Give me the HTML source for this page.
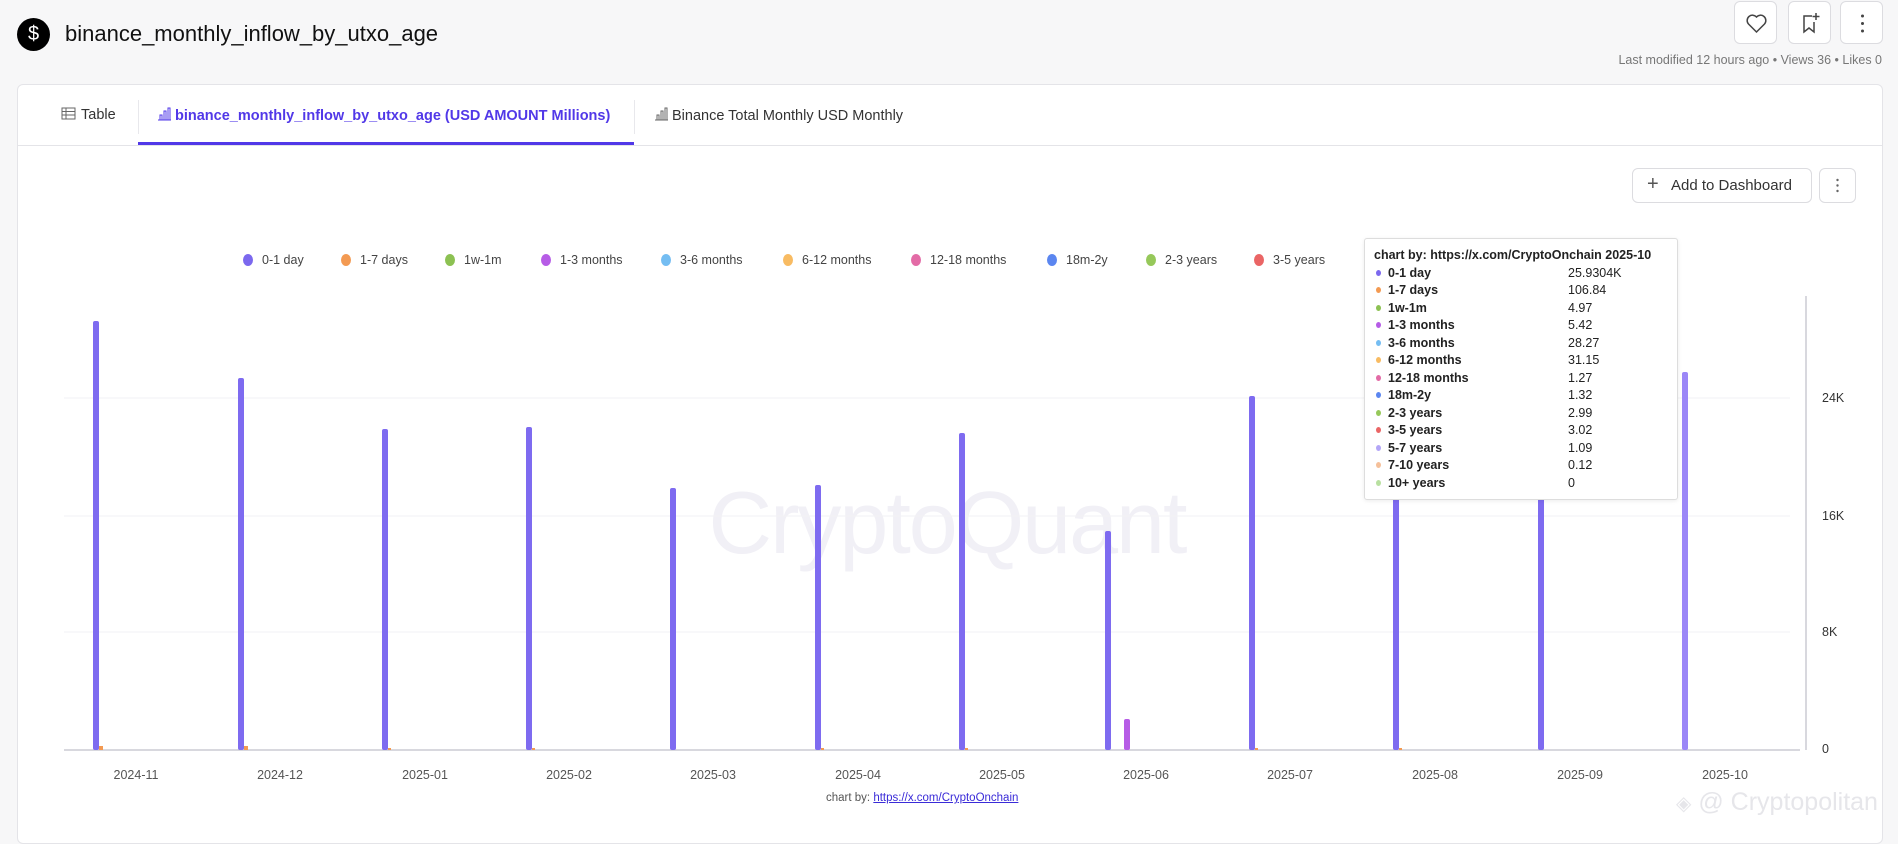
<!DOCTYPE html>
<html><head><meta charset="utf-8"><style>
*{margin:0;padding:0;box-sizing:border-box}
body{width:1898px;height:827px;overflow:hidden;background:#f7f7f8;font-family:"Liberation Sans",sans-serif;position:relative;color:#222}
.a{position:absolute}
.btn{position:absolute;border:1px solid #dcdce0;border-radius:6px;background:#fff}
.tab{position:absolute;top:107px;font-size:14.5px;color:#333;white-space:nowrap}
.lg{position:absolute;top:253px;font-size:12.5px;color:#444;white-space:nowrap}
.lg i{display:inline-block;width:10px;height:12px;border-radius:50%;margin-right:9px;vertical-align:-2px}
.xl{position:absolute;top:768px;font-size:12.5px;color:#555;transform:translateX(-50%)}
.yl{position:absolute;left:1822px;font-size:12.5px;color:#333}
.tt{position:absolute;left:1364px;top:238px;width:314px;height:262px;background:#fff;border:1px solid #ddd;border-radius:3px;font-size:12.5px;padding:8px 0 0 9px;box-shadow:0 1px 4px rgba(0,0,0,.08)}
.tt div{height:17.5px;line-height:17.5px;position:relative;white-space:nowrap}
.tt b{font-weight:bold}
.tt i{display:inline-block;width:5px;height:6px;border-radius:50%;margin:0 7px 1px 2px;vertical-align:middle}
.tt span{position:absolute;left:194px;color:#222}
</style></head><body>
<div class="a" style="left:17px;top:18px;width:33px;height:33px;border-radius:50%;background:#000;color:#fff;font-size:20px;text-align:center;line-height:33px">$</div>
<div class="a" style="left:65px;top:21px;font-size:22px;color:#111">binance_monthly_inflow_by_utxo_age</div>
<div class="btn" style="left:1734px;top:1px;width:43px;height:43px"><svg width="43" height="43"><path d="M21.5 30 L13.5 22 A4.6 4.6 0 0 1 21.5 15 A4.6 4.6 0 0 1 29.5 22 Z" fill="none" stroke="#444" stroke-width="1.5"/></svg></div>
<div class="btn" style="left:1788px;top:1px;width:43px;height:43px"><svg width="43" height="43"><path d="M23 14 H15 V30 L20 26 L25 30 V20 M27 11 V18 M23.5 14.5 H30.5" fill="none" stroke="#444" stroke-width="1.5"/></svg></div>
<div class="btn" style="left:1840px;top:1px;width:43px;height:43px"><svg width="43" height="43"><circle cx="21.5" cy="14" r="1.5" fill="#444"/><circle cx="21.5" cy="21.5" r="1.5" fill="#444"/><circle cx="21.5" cy="29" r="1.5" fill="#444"/></svg></div>
<div class="a" style="right:16px;top:53px;font-size:12.5px;color:#777">Last modified 12 hours ago • Views 36 • Likes 0</div>

<div class="a" style="left:17px;top:84px;width:1866px;height:760px;background:#fff;border:1px solid #e4e4e8;border-radius:6px"></div>
<div class="a" style="left:18px;top:145px;width:1864px;height:1px;background:#e4e4e8"></div>
<div class="a" style="left:138px;top:142px;width:496px;height:3px;background:#5138e8"></div>
<div class="a" style="left:138px;top:100px;width:1px;height:34px;background:#e8e8ec"></div>
<div class="a" style="left:634px;top:100px;width:1px;height:34px;background:#e8e8ec"></div>
<div class="tab" style="left:61px"><svg width="15" height="13" style="vertical-align:-1px;margin-right:5px"><rect x="1" y="1" width="13" height="11" fill="none" stroke="#666"/><path d="M1 4.5H14M1 8H14M5 1V12" stroke="#666"/></svg>Table</div>
<div class="tab" style="left:157px;color:#5138e8;font-weight:bold"><svg width="15" height="14" style="vertical-align:-1px;margin-right:3px"><path d="M1 13H14M3 13V8H5V13M7 13V4H9V13M11 13V1H13V13" fill="none" stroke="#5138e8"/></svg>binance_monthly_inflow_by_utxo_age (USD AMOUNT Millions)</div>
<div class="tab" style="left:654px"><svg width="15" height="14" style="vertical-align:-1px;margin-right:3px"><path d="M1 13H14M3 13V8H5V13M7 13V4H9V13M11 13V1H13V13" fill="none" stroke="#666"/></svg>Binance Total Monthly USD Monthly</div>

<div class="btn" style="left:1632px;top:168px;width:180px;height:35px;font-size:15px;color:#333;line-height:33px;padding-left:38px">Add to Dashboard<span style="position:absolute;left:14px;top:-1px;font-size:20px;color:#555">+</span></div>
<div class="btn" style="left:1819px;top:168px;width:37px;height:35px"><svg width="35" height="33"><circle cx="17.5" cy="11" r="1.2" fill="#666"/><circle cx="17.5" cy="16.5" r="1.2" fill="#666"/><circle cx="17.5" cy="22" r="1.2" fill="#666"/></svg></div>

<div class="lg" style="left:243px"><i style="background:#7b68ee"></i>0-1 day</div>
<div class="lg" style="left:341px"><i style="background:#f39a52"></i>1-7 days</div>
<div class="lg" style="left:445px"><i style="background:#8cc152"></i>1w-1m</div>
<div class="lg" style="left:541px"><i style="background:#b65ce6"></i>1-3 months</div>
<div class="lg" style="left:661px"><i style="background:#74bdf2"></i>3-6 months</div>
<div class="lg" style="left:783px"><i style="background:#f8bb62"></i>6-12 months</div>
<div class="lg" style="left:911px"><i style="background:#e36ba6"></i>12-18 months</div>
<div class="lg" style="left:1047px"><i style="background:#5b86f0"></i>18m-2y</div>
<div class="lg" style="left:1146px"><i style="background:#96c85a"></i>2-3 years</div>
<div class="lg" style="left:1254px"><i style="background:#ea6565"></i>3-5 years</div>

<svg class="a" style="left:0;top:0" width="1898" height="827">
<text x="947" y="553" font-family="Liberation Sans" font-size="88" fill="#f1f0f6" text-anchor="middle" letter-spacing="-2">CryptoQuant</text>
<g stroke="#f2f2f4"><line x1="64" y1="398" x2="1790" y2="398"/><line x1="64" y1="516" x2="1790" y2="516"/><line x1="64" y1="632" x2="1790" y2="632"/></g>
<line x1="1806" y1="296" x2="1806" y2="750" stroke="#d8d8de" stroke-width="2"/>
<line x1="64" y1="750" x2="1800" y2="750" stroke="#d8d8de" stroke-width="2"/>
<g fill="#7e6bf0">
<rect x="93" y="321" width="6" height="429" rx="2"/>
<rect x="238" y="378" width="6" height="372" rx="2"/>
<rect x="382" y="429" width="6" height="321" rx="2"/>
<rect x="526" y="427" width="6" height="323" rx="2"/>
<rect x="670" y="488" width="6" height="262" rx="2"/>
<rect x="815" y="485" width="6" height="265" rx="2"/>
<rect x="959" y="433" width="6" height="317" rx="2"/>
<rect x="1105" y="531" width="6" height="219" rx="2"/>
<rect x="1249" y="396" width="6" height="354" rx="2"/>
<rect x="1393" y="470" width="6" height="280" rx="2"/>
<rect x="1538" y="470" width="6" height="280" rx="2"/>
</g>
<rect x="1682" y="372" width="6" height="378" rx="2" fill="#9b87f7"/>
<rect x="1124" y="719" width="6" height="31" rx="2" fill="#b65ce6"/>
<g fill="#f39a52"><rect x="99" y="746" width="4" height="4"/><rect x="244" y="746" width="4" height="4"/><rect x="388" y="748" width="3" height="2"/><rect x="532" y="748" width="3" height="2"/><rect x="821" y="748" width="3" height="2"/><rect x="965" y="748" width="3" height="2"/><rect x="1255" y="748" width="3" height="2"/><rect x="1399" y="748" width="3" height="2"/></g>
</svg>
<div class="yl" style="top:391px">24K</div>
<div class="yl" style="top:509px">16K</div>
<div class="yl" style="top:625px">8K</div>
<div class="yl" style="top:742px">0</div>
<div class="xl" style="left:136px">2024-11</div><div class="xl" style="left:280px">2024-12</div><div class="xl" style="left:425px">2025-01</div><div class="xl" style="left:569px">2025-02</div><div class="xl" style="left:713px">2025-03</div><div class="xl" style="left:858px">2025-04</div><div class="xl" style="left:1002px">2025-05</div><div class="xl" style="left:1146px">2025-06</div><div class="xl" style="left:1290px">2025-07</div><div class="xl" style="left:1435px">2025-08</div><div class="xl" style="left:1580px">2025-09</div><div class="xl" style="left:1725px">2025-10</div>
<div class="a" style="left:826px;top:792px;font-size:11.5px;color:#555">chart by: <span style="color:#3a2bd8;text-decoration:underline">https://x.com/CryptoOnchain</span></div>
<div class="a" style="left:1676px;top:788px;font-size:25px;color:#e6e6ea;white-space:nowrap"><span style="font-size:20px">◈</span> @ Cryptopolitan</div>

<div class="tt">
<div><b>chart by: https://x.com/CryptoOnchain 2025-10</b></div>
<div><i style="background:#7b68ee"></i><b>0-1 day</b><span>25.9304K</span></div>
<div><i style="background:#f39a52"></i><b>1-7 days</b><span>106.84</span></div>
<div><i style="background:#8cc152"></i><b>1w-1m</b><span>4.97</span></div>
<div><i style="background:#b65ce6"></i><b>1-3 months</b><span>5.42</span></div>
<div><i style="background:#74bdf2"></i><b>3-6 months</b><span>28.27</span></div>
<div><i style="background:#f8bb62"></i><b>6-12 months</b><span>31.15</span></div>
<div><i style="background:#e36ba6"></i><b>12-18 months</b><span>1.27</span></div>
<div><i style="background:#5b86f0"></i><b>18m-2y</b><span>1.32</span></div>
<div><i style="background:#96c85a"></i><b>2-3 years</b><span>2.99</span></div>
<div><i style="background:#ea6565"></i><b>3-5 years</b><span>3.02</span></div>
<div><i style="background:#b3a6f7"></i><b>5-7 years</b><span>1.09</span></div>
<div><i style="background:#f5c09a"></i><b>7-10 years</b><span>0.12</span></div>
<div><i style="background:#b8e0a0"></i><b>10+ years</b><span>0</span></div>
</div>
</body></html>
